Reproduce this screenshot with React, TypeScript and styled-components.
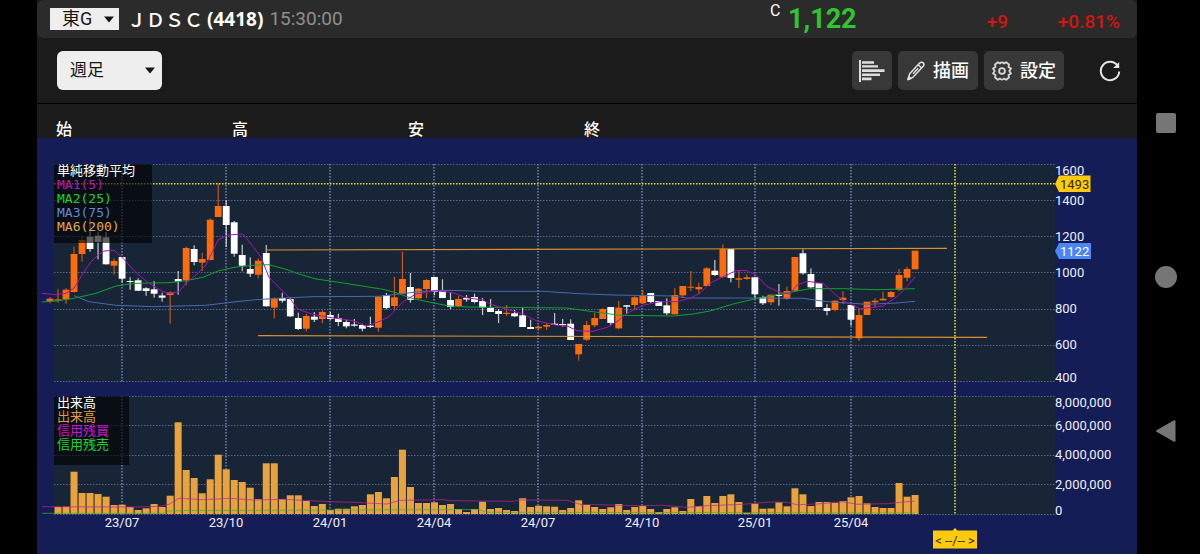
import React from "react";
import styled, { createGlobalStyle } from "styled-components";

const sans = `Roboto, "Noto Sans CJK JP", sans-serif`;
const mono = `"DejaVu Sans Mono", "Noto Sans CJK JP", monospace`;

const color = {
  up: "#ff6a0a",
  down: "#ffffff",
  volume: "#eaa23c",
  trend: "#d98e2f",
  ma1: "#a512b4",
  ma2: "#12a02c",
  ma3: "#4a68ad",
  grid: "#64749f",
  cursor: "#e2e03a",
  label: "#eef0fa",
  plot: "#182536",
  navy: "#151d57",
  badge: "#ffcb0c",
  current: "#4a86f5",
};

const GlobalStyle = createGlobalStyle`
  * { box-sizing: border-box; }
  body { margin: 0; background: #000; color: #fff; font-family: ${sans}; }
`;

const Device = styled.div`
  display: flex;
  min-height: 100vh;
  padding-left: 37px;
  background: #000;
`;

const Screen = styled.main`
  flex: 1;
  min-width: 0;
  background: ${color.navy};
`;

const TopArea = styled.div`
  background: #1b1b1b;
`;

const QuoteBar = styled.header`
  display: flex;
  align-items: center;
  height: 38px;
  padding: 0 17px 0 13px;
  background: #2b2b2b;
  border-radius: 6px;
`;

const SelectWrap = styled.label<{ $large?: boolean }>`
  position: relative;
  display: inline-flex;
  align-items: center;
  svg {
    position: absolute;
    right: ${(p) => (p.$large ? 6 : 4)}px;
    pointer-events: none;
  }
`;

const Select = styled.select<{ $large?: boolean }>`
  appearance: none;
  border: 0;
  margin: 0;
  background: #eee;
  color: #161616;
  font-family: ${sans};
  font-size: ${(p) => (p.$large ? 17 : 18)}px;
  line-height: 22px;
  width: ${(p) => (p.$large ? 105 : 69)}px;
  height: ${(p) => (p.$large ? 39 : 22)}px;
  padding: ${(p) => (p.$large ? "0 12px 2px 13px" : "0 12px")};
  border-radius: ${(p) => (p.$large ? 6 : 0)}px;
`;

const StockName = styled.h1`
  display: flex;
  align-items: center;
  margin: 0 0 0 8px;
  font-family: "Noto Sans CJK JP", sans-serif;
  font-size: 19px;
  font-weight: 500;
  line-height: 24px;
  white-space: nowrap;
`;

const StockCode = styled.span`
  margin-left: 4px;
  font-family: "Noto Sans", sans-serif;
  font-weight: 700;
`;

const Time = styled.time`
  flex: 1;
  margin-left: 6px;
  color: #8f8f8f;
  font-size: 19px;
  line-height: 24px;
`;

const Price = styled.div`
  display: flex;
  align-items: flex-start;
  width: 118px;
  height: 36px;
  color: #2fc72b;
  font-size: 27px;
  font-weight: 700;
  line-height: 36px;
`;

const CloseMark = styled.span`
  width: 18px;
  color: #fff;
  font-size: 16px;
  font-weight: 400;
  line-height: 20px;
`;

const Change = styled.div<{ $width: number }>`
  width: ${(p) => p.$width}px;
  padding-top: 5px;
  color: #d3160f;
  font-size: 19px;
  font-weight: 500;
  line-height: 24px;
  text-align: right;
`;

const Toolbar = styled.div`
  display: flex;
  align-items: center;
  height: 65px;
  padding: 0 15px 0 20px;
`;

const Actions = styled.div`
  display: flex;
  align-items: center;
  gap: 6px;
  margin-left: auto;
`;

const ToolButton = styled.button<{ $square?: boolean }>`
  display: flex;
  align-items: center;
  justify-content: center;
  gap: 8px;
  width: ${(p) => (p.$square ? 40 : 80)}px;
  height: 39px;
  padding: 0;
  border: 0;
  border-radius: 5px;
  background: #383838;
  color: #fff;
  font-family: "Noto Sans CJK JP", sans-serif;
  font-size: 18px;
  font-weight: 500;
`;

const ToolText = styled.span`
  padding-bottom: 3px;
  line-height: 24px;
`;

const RefreshButton = styled.button`
  display: flex;
  margin-left: 34px;
  padding: 0;
  border: 0;
  background: none;
  color: #e6e6e6;
`;

const OhlcRow = styled.div`
  display: flex;
  align-items: flex-end;
  height: 35px;
  padding-left: 19px;
  border-top: 1px solid #000;
`;

const OhlcCell = styled.span`
  width: 176px;
  font-family: "Noto Sans CJK JP", sans-serif;
  font-size: 16px;
  font-weight: 500;
  line-height: 20px;
`;

const ChartArea = styled.section`
  position: relative;
`;

const ChartSvg = styled.svg`
  display: block;
  width: 100%;
  height: auto;
  font-family: ${sans};
  font-size: 13px;
`;

const Legend = styled.ul<{ $top: number; $width: number; $height: number }>`
  position: absolute;
  left: 17px;
  top: ${(p) => p.$top}px;
  width: ${(p) => p.$width}px;
  height: ${(p) => p.$height}px;
  margin: 0;
  padding: 0 3px;
  list-style: none;
  background: rgba(0, 0, 0, 0.62);
  font-family: ${mono};
  font-size: 13px;
  line-height: 14px;
`;

const LegendItem = styled.li<{ $color: string }>`
  height: 14px;
  color: ${(p) => p.$color};
  white-space: nowrap;
`;

const SystemNav = styled.nav`
  display: grid;
  grid-auto-rows: 154px;
  align-content: center;
  justify-items: center;
  width: 63px;
  padding-right: 6px;
`;

const NavButton = styled.button`
  display: flex;
  align-items: center;
  padding: 0;
  border: 0;
  background: none;
  color: #767676;
`;

/* [kind, high, body top, body bottom, low] for each week, in chart units */
type Candle = ["O" | "W", number, number, number, number];
const candles: Candle[] = [
  ["O", 297, 298.7, 301, 303.3], ["O", 289.3, 299.4, 300.6, 302.7], ["O", 288, 289.7, 299.3, 303.7],
  ["O", 246.7, 254, 292, 292.5], ["O", 236, 240, 254, 261.7], ["W", 218.3, 236.7, 249, 251.7],
  ["W", 231.7, 235.7, 242, 259.3], ["W", 232, 237.3, 264.3, 264.5], ["O", 258.3, 261, 265.7, 274.7],
  ["W", 257, 257, 278.7, 282.7], ["W", 277.3, 281, 282, 289.7], ["W", 278.3, 280.3, 290.7, 291],
  ["W", 287.3, 288.3, 291, 295.7], ["W", 281, 289.3, 293.7, 297.7], ["W", 292.7, 295.5, 297.7, 301.7],
  ["O", 291.5, 292.3, 295, 323.7], ["W", 271, 279, 281.7, 294.7], ["O", 246.7, 248, 280.3, 285.3],
  ["W", 245.3, 249, 262, 265.3], ["O", 252.7, 259, 262.7, 271], ["O", 218.3, 219.7, 260, 260],
  ["O", 183.3, 206, 217, 217], ["W", 200, 206, 225, 247], ["W", 221, 222.3, 253.7, 256.7],
  ["W", 244.7, 255, 265.7, 271.3], ["W", 257.3, 269, 273.7, 277], ["O", 258.3, 260.7, 274.7, 278.3],
  ["W", 245, 253, 306.3, 306.5], ["O", 297.3, 298.7, 307.7, 318.3], ["W", 292.7, 298, 300.7, 302.7],
  ["W", 297.3, 299, 316.3, 317], ["W", 312.7, 318, 329, 330], ["O", 314, 316, 328.7, 331.3],
  ["W", 312, 316.7, 319.7, 322], ["O", 310.3, 312, 319, 323], ["W", 312, 315, 319, 320],
  ["W", 313.7, 318, 322, 326], ["W", 320, 322, 326.3, 328.3], ["W", 319, 324.5, 325.7, 326.7],
  ["W", 323.7, 325, 328.7, 331.3], ["W", 316.7, 325.7, 327, 328], ["O", 296.7, 296.7, 327.7, 331.7],
  ["W", 293, 295, 308, 309.3], ["O", 276.7, 297.3, 306, 309.3], ["O", 251.7, 279, 294, 294],
  ["W", 273, 287, 300, 302.7], ["O", 288, 288.7, 298.3, 299], ["O", 279, 280, 289, 298],
  ["W", 277, 277, 292, 295.3], ["W", 279.3, 291, 298, 298], ["W", 292, 300, 307, 309.3],
  ["O", 295.7, 299, 306, 307.3], ["W", 295, 298, 299.5, 301.7], ["W", 293.7, 297, 302, 303.3],
  ["W", 298, 301, 307.5, 315], ["W", 299, 308, 312, 312], ["W", 309, 311, 314, 323],
  ["O", 305, 312.8, 314, 316], ["W", 310, 313.3, 316.3, 317], ["W", 308, 315.3, 327, 327],
  ["W", 319.7, 327, 329, 329], ["O", 325.3, 326.7, 328.3, 330], ["O", 323, 325, 326.7, 330],
  ["W", 313, 323.7, 325, 325], ["W", 319, 324, 325.3, 326.7], ["W", 319.3, 323.7, 340, 340],
  ["O", 344, 344, 354.3, 360.7], ["O", 321, 325, 339.7, 341], ["O", 313, 318, 325.3, 327.3],
  ["O", 308, 309, 319, 319], ["W", 307, 307, 323, 325], ["O", 301, 307.7, 328.3, 329.3],
  ["W", 305, 305.3, 306.7, 314], ["O", 296, 297.3, 305, 310], ["O", 290, 295.7, 303.3, 304],
  ["W", 293, 293, 302, 303], ["W", 301, 301, 306, 306], ["W", 298.3, 305.3, 313.3, 315],
  ["O", 288, 295, 314.3, 314.3], ["O", 286, 286, 295.3, 298], ["O", 271, 286.7, 287.5, 291],
  ["O", 282.7, 287, 289.3, 294], ["O", 267, 268.3, 286, 286], ["W", 260, 270.7, 275, 276],
  ["O", 244.3, 249, 277, 278.3], ["W", 249, 249, 278, 282.3], ["O", 270.3, 278.3, 279.7, 288],
  ["O", 274.3, 277.3, 279, 280], ["W", 277.3, 277.3, 294.3, 298.7], ["W", 295.7, 297, 303.3, 305],
  ["O", 294.7, 294.7, 302.3, 305], ["W", 284, 294.7, 296, 305.7], ["O", 286.7, 291, 299, 300],
  ["O", 257, 257, 290.7, 292], ["W", 249.3, 253.3, 273.3, 274.7], ["W", 268.3, 274, 287.3, 288.3],
  ["W", 283.3, 283.3, 307, 307], ["W", 304, 308, 311, 315.3], ["O", 300.7, 300.7, 310, 311.3],
  ["O", 291, 297.7, 300, 304], ["W", 305, 305, 319.7, 325.7], ["O", 308.3, 315, 338.3, 341],
  ["O", 301.7, 301.7, 315, 315], ["O", 298, 300.7, 302.3, 307.7], ["O", 291.7, 298.7, 300.3, 300.5],
  ["O", 291, 292, 297, 298.3], ["O", 269, 275, 290, 291.3], ["O", 266.7, 269, 277.7, 281.3],
  ["O", 250.7, 250.7, 269.3, 269.3],
];

/* Top edge of each weekly volume bar, starting with the second week */
const volumeTops = [
  507, 506.7, 471.7, 493, 493, 494, 496.7, 505, 504.7, 507, 510, 508.3, 504, 507, 495.7, 422.3, 470, 478,
  493.3, 479.3, 454.7, 469.3, 480, 482, 487.7, 499, 463.3, 463.3, 499, 495.3, 495.3, 501, 506, 504, 510,
  508.7, 508.7, 506.3, 505, 494.3, 492, 498.3, 477, 449.7, 487, 503, 503, 502.3, 505, 504, 509, 512, 509,
  501.7, 509, 508, 510, 511, 498.3, 507, 505.7, 506.3, 506.7, 510, 508, 500.3, 505, 507, 509, 507.3, 504,
  510, 507, 506, 509, 512, 509, 507.3, 511, 499, 506, 496, 503, 496, 494.3, 502, 513, 503.7, 508.7, 508.5,
  502.3, 506.3, 488.3, 494.3, 506, 502, 502, 502.7, 501, 497.3, 496, 503.3, 507, 508, 508, 483, 496.7, 495,
];

const ma1 =
  "42,293.3 56,294.7 66,293.3 74,288.3 83,273.3 91,261.7 98,255 104,251 114,250.3 123,258.3 136,272.7 149,283.3 163,291.7 170,293.3 179,291.7 186,283.3 196,275 206,265 218,240 228,235 243,234 253,246.7 261,257.3 269,277.3 289,297.3 298,309.3 313,314.3 329,317.3 353,320.7 366,326 379,321.7 389,316.7 403,301.7 416,294 436,290.7 453,292.7 466,297.7 483,300 490,304 507,309.3 523,314 537,321 557,325.3 568,326.3 577,330.7 593,331.3 607,327.3 617,321.7 627,313.3 643,305.3 660,301.7 677,301.7 690,298.3 700,293.3 710,283.3 723,276.7 737,270.3 747,270.7 757,275.7 767,286.7 780,292.3 790,294 797,285 807,281.3 823,283.3 837,296 847,302.7 860,308.7 883,306 897,296.7 907,286.7 915,276.7";
const ma2 =
  "42,302 56,301 74,298.3 96,293.3 116,286 136,283.3 169,282.7 186,280.7 203,277.3 219,270.7 236,267 253,265.3 269,264.7 286,269.3 299,274 316,279 339,282.3 383,289.3 396,292.7 413,298.7 429,302 449,306 469,307 567,308 590,311.3 620,315.3 673,316 693,314 710,311 733,304 753,299.3 763,297.3 790,292.3 810,288.7 843,288.7 877,289.7 915,288.7";
const ma3 =
  "74,295.7 89,301.7 116,305.3 153,306.7 206,305.3 236,301.7 256,299.7 283,298 313,296.7 379,296.3 423,291.3 446,290.3 480,291.3 543,291.3 580,293.7 613,295 673,296 687,298 740,298 803,298.3 827,301.7 867,304.3 897,303 915,301.3";
const marginBuy =
  "42,506.7 136,507 160,506.3 169,504.3 179,498.3 203,499.7 229,498.3 253,500 283,499.3 330,501.7 353,502.3 387,504 400,500.3 443,499.7 450,500.7 513,501.3 520,500 567,500.3 580,504.3 640,505.7 663,505.3 687,507.3 707,505.7 743,504.3 770,502 787,502.3 797,504.7 817,504 843,501.7 857,504.3 887,503.7 907,501.7 915,501";
const marginSell = "42,513.3 163,513.3 169,511 183,510.5 479,509.6 487,512.3 915,513";

const priceGrid = [164.5, 200.5, 236.5, 272.5, 309.5, 345.5, 381.5];
const volumeGrid = [396.5, 425.5, 455.5, 484.5, 514.5];
const axisLabels: [string, number][] = [
  ["1600", 175], ["1400", 205], ["1200", 241], ["1000", 277], ["800", 313], ["600", 349], ["400", 382],
  ["8,000,000", 407], ["6,000,000", 430], ["4,000,000", 459], ["2,000,000", 489], ["0", 515],
];
const months: [string, number][] = [
  ["23/07", 122], ["23/10", 226], ["24/01", 330], ["24/04", 434], ["24/07", 538], ["24/10", 642],
  ["25/01", 755], ["25/04", 851],
];

const weekX = (i: number) => 50 + i * 8.01;

const Chevron = () => (
  <svg width="12" height="7" viewBox="0 0 12 7" aria-hidden="true">
    <path d="M1 0.5h10L6 6.5z" fill="#161616" />
  </svg>
);

const BarsIcon = () => (
  <svg width="26" height="22" viewBox="0 0 26 22" fill="#dedede" aria-hidden="true">
    <path d="M0 0h2v22H0zM3 1.2h12v2.600H3zM3 5.200h16v2.400H3zM3 9.300h22.500v2.600H3zM3 13.500h18v2.400H3zM3 17.600h9.500v2.600H3z" />
  </svg>
);

const PencilIcon = () => (
  <svg width="18" height="20" viewBox="0 0 18 20" fill="none" stroke="#e2e2e2" strokeWidth="1.5" strokeLinejoin="round" aria-hidden="true">
    <path d="M1 18.600 2.700 12.800 12.600 2.100C13.800.8 15.300 1 16.200 1.900 17.100 2.800 17.100 4.200 16 5.400L6.200 16.100z" />
    <path d="M11.200 3.800l3.300 3.200M6 12.800l5.200-5.600" />
    <path d="M1 18.600l.9-2.800 1.800 1.800z" fill="#e2e2e2" />
  </svg>
);

const GearIcon = () => (
  <svg width="20" height="20" viewBox="0 0 20 20" fill="none" stroke="#d8d8d8" strokeWidth="1.800" strokeLinejoin="round" aria-hidden="true">
    <path d="M5.900 1.200 8 2.500Q10 .2 12 2.500L14.100 1.200 17 3.500 16.500 6 19 7.500 17.300 10 19 12.500 16.500 14 17 16.500 14.100 18.800 12 17.500Q10 19.800 8 17.500L5.900 18.800 3 16.500 3.500 14 1 12.500 2.700 10 1 7.500 3.500 6 3 3.500z" />
    <circle cx="10" cy="10" r="2.900" />
  </svg>
);

const RefreshIcon = () => (
  <svg width="24" height="24" viewBox="0 0 24 24" fill="none" stroke="currentColor" strokeWidth="2" aria-hidden="true">
    <path d="M19.600 6.800A9.200 9.200 0 1 0 21.200 12.500" />
    <path d="M21.200 3v6h-6z" fill="currentColor" stroke="none" />
  </svg>
);

const Chart = () => (
  <ChartSvg viewBox="37 138 1100 416" role="img" aria-label="株価チャート">
    <rect x="54" y="164" width="1001" height="218" fill={color.plot} />
    <rect x="54" y="396" width="1001" height="119" fill={color.plot} />
    <g stroke={color.grid} strokeDasharray="1.5 1.5">
      {[...priceGrid, ...volumeGrid].map((y) => (
        <path key={y} d={`M54 ${y}H1055`} opacity="0.85" />
      ))}
      {months.map(([m, x]) => (
        <path key={m} d={`M${x} 164V382M${x} 396V515`} strokeWidth="1.8" />
      ))}
    </g>
    {candles.map(([kind, high, top, bottom, low], i) => (
      <g key={i} fill={kind === "O" ? color.up : color.down}>
        <rect x={weekX(i) - 0.6} y={high} width="1.2" height={low - high} opacity="0.75" />
        <rect x={weekX(i) - 3.4} y={top} width="6.8" height={Math.max(bottom - top, 1)} />
      </g>
    ))}
    {volumeTops.map((top, i) => (
      <rect key={i} x={weekX(i + 1) - 3.5} y={top} width="7" height={514 - top} fill={color.volume} />
    ))}
    <g fill="none" strokeLinejoin="round">
      <polyline points={ma3} stroke={color.ma3} />
      <polyline points={ma2} stroke={color.ma2} />
      <polyline points={ma1} stroke={color.ma1} />
      <polyline points={marginBuy} stroke="#c01fa0" opacity="0.7" />
      <polyline points={marginSell} stroke="#3fae3a" opacity="0.7" />
      <path d="M266 250 947 248.3M258 335.7 987 337.3" stroke={color.trend} strokeWidth="1.2" />
    </g>
    <g stroke={color.cursor} strokeWidth="1.6" strokeDasharray="1.5 1.5">
      <path d="M54 183.7H1055" />
      <path d="M955 164V515" />
    </g>
    <g fill={color.label}>
      {axisLabels.map(([text, y]) => (
        <text key={text} x="1055" y={y}>{text}</text>
      ))}
      {months.map(([text, x]) => (
        <text key={text} x={x} y="527" textAnchor="middle">{text}</text>
      ))}
    </g>
    <path d="M1055 184 1059 175.5H1090.500V192H1059z" fill={color.badge} />
    <text x="1060" y="189" fill="#332a00">1493</text>
    <path d="M1055 251 1059 243H1091V259H1059z" fill={color.current} />
    <text x="1060" y="256" fill="#fff">1122</text>
    <path d="M933 530.500H952.500L955 528 957.500 530.500H977V548.500H933z" fill={color.badge} />
    <text x="955" y="545" textAnchor="middle" fill="#332a00">&lt; --/-- &gt;</text>
  </ChartSvg>
);

export default function App() {
  return (
    <>
      <GlobalStyle />
      <Device>
        <Screen>
          <TopArea>
            <QuoteBar>
              <SelectWrap>
                <Select aria-label="市場" defaultValue="tg">
                  <option value="tg">東G</option>
                </Select>
                <Chevron />
              </SelectWrap>
              <StockName>
                ＪＤＳＣ<StockCode>(4418)</StockCode>
              </StockName>
              <Time>15:30:00</Time>
              <Price>
                <CloseMark>C</CloseMark>1,122
              </Price>
              <Change $width={120}>+9</Change>
              <Change $width={112}>+0.81%</Change>
            </QuoteBar>
            <Toolbar>
              <SelectWrap $large>
                <Select $large aria-label="足種" defaultValue="w">
                  <option value="w">週足</option>
                </Select>
                <Chevron />
              </SelectWrap>
              <Actions>
                <ToolButton $square aria-label="価格帯別出来高"><BarsIcon /></ToolButton>
                <ToolButton><PencilIcon /><ToolText>描画</ToolText></ToolButton>
                <ToolButton><GearIcon /><ToolText>設定</ToolText></ToolButton>
              </Actions>
              <RefreshButton aria-label="更新"><RefreshIcon /></RefreshButton>
            </Toolbar>
            <OhlcRow>
              {["始", "高", "安", "終"].map((t) => (
                <OhlcCell key={t}>{t}</OhlcCell>
              ))}
            </OhlcRow>
          </TopArea>
          <ChartArea>
            <Chart />
            <Legend $top={26} $width={98} $height={79}>
              <LegendItem $color="#fff">単純移動平均</LegendItem>
              <LegendItem $color="#b814c4">MA1(5)</LegendItem>
              <LegendItem $color="#18d62c">MA2(25)</LegendItem>
              <LegendItem $color="#6488dc">MA3(75)</LegendItem>
              <LegendItem $color="#e0a850">MA6(200)</LegendItem>
            </Legend>
            <Legend $top={258} $width={75} $height={69}>
              <LegendItem $color="#fff">出来高</LegendItem>
              <LegendItem $color="#e09a3c">出来高</LegendItem>
              <LegendItem $color="#c814cc">信用残買</LegendItem>
              <LegendItem $color="#18d62c">信用残売</LegendItem>
            </Legend>
          </ChartArea>
        </Screen>
        <SystemNav aria-label="システム">
          <NavButton aria-label="履歴">
            <svg width="22" height="22"><rect x="1" y="1" width="20" height="20" rx="2" fill="currentColor" /></svg>
          </NavButton>
          <NavButton aria-label="ホーム">
            <svg width="22" height="22"><circle cx="11" cy="11" r="11" fill="currentColor" /></svg>
          </NavButton>
          <NavButton aria-label="戻る">
            <svg width="22" height="22">
              <path d="M2 11 19.500 1.200V20.800z" fill="currentColor" stroke="currentColor" strokeWidth="2" strokeLinejoin="round" />
            </svg>
          </NavButton>
        </SystemNav>
      </Device>
    </>
  );
}
